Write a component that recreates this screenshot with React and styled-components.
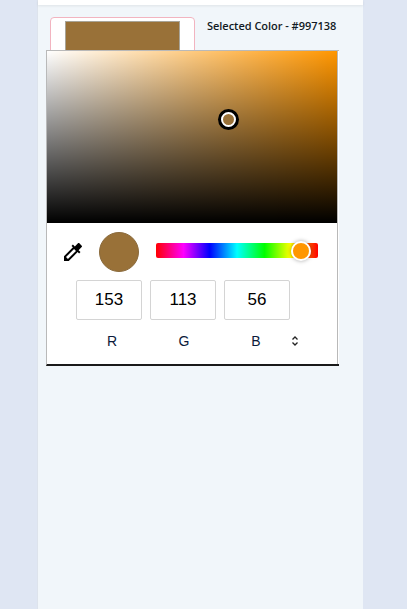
import React from "react";
import styled, { createGlobalStyle } from "styled-components";

const Global = createGlobalStyle`
  html, body { margin: 0; padding: 0; height: 100%; overflow: hidden; background: #dfe6f3; }
  #root { height: 609px; }
  * { box-sizing: border-box; }
`;

const Page = styled.div`
  width: 407px;
  height: 609px;
  padding-left: 37px;
  background: #dfe6f3;
`;

const Column = styled.main`
  position: relative;
  width: 326px;
  height: 609px;
  background: #f1f6fa;
  border-left: 1px solid #dde3ec;
`;

const TopCard = styled.div`
  height: 5px;
  background: #ffffff;
  box-shadow: 0 1px 3px rgba(0, 0, 0, 0.08);
`;

const SelectedRow = styled.section`
  display: flex;
  align-items: flex-start;
  padding: 12px 0 0 12px;
`;

const SwatchFrame = styled.div`
  display: flex;
  justify-content: center;
  width: 145px;
  height: 60px;
  padding-top: 3px;
  background: #ffffff;
  border: 1.5px solid #f2b4c0;
  border-radius: 4px;
`;

const Swatch = styled.div`
  width: 115px;
  height: 50px;
  background: #997138;
  border: 1px solid #a8a498;
`;

const SelectedLabel = styled.p`
  margin: 2px 0 0 12px;
  font: 600 11px/14px "Open Sans", sans-serif;
  letter-spacing: -0.03px;
  color: #111a24;
  white-space: nowrap;
`;

const Popover = styled.div`
  position: absolute;
  left: 8px;
  top: 50px;
  width: 293px;
  height: 316px;
  background: #ffffff;
  border-top: 1px solid #b9b9b9;
  border-left: 1px solid #b9b9b9;
  border-bottom: 2px solid #1a1a1a;
`;

const Inner = styled.div`
  width: 291px;
  height: 100%;
  border-right: 1px solid #b9b9b9;
`;

const Saturation = styled.div`
  position: relative;
  height: 172px;
  background:
    linear-gradient(to top, #000000, rgba(0, 0, 0, 0)),
    linear-gradient(to right, #ffffff, rgba(255, 255, 255, 0)),
    #ff9600;
`;

const Cursor = styled.div`
  position: absolute;
  left: 174px;
  top: 61px;
  width: 15px;
  height: 15px;
  border-radius: 50%;
  background: #997138;
  border: 2px solid #ffffff;
  box-shadow: 0 0 0 3px #000000;
`;

const Controls = styled.div`
  display: flex;
  align-items: center;
  padding: 9px 0 0 14px;
`;

const Dropper = styled.svg`
  display: block;
  width: 24px;
  height: 24px;
  fill: #000000;
`;

const Preview = styled.div`
  width: 40px;
  height: 40px;
  margin-left: 14px;
  border-radius: 50%;
  background: #997138;
  border: 1px solid #8a6a3c;
`;

const Hue = styled.div`
  position: relative;
  width: 162px;
  height: 15px;
  margin: 0 0 3px 17px;
  border-radius: 2px;
  background: linear-gradient(
    to right,
    #ff0000 0%,
    #ff00ff 17%,
    #0000ff 33%,
    #00ffff 50%,
    #00ff00 67%,
    #ffff00 83%,
    #ff0000 100%
  );
`;

const HueThumb = styled.div`
  position: absolute;
  left: 135px;
  top: -2px;
  width: 20px;
  height: 20px;
  border-radius: 50%;
  background: #ff9600;
  border: 2px solid #ffffff;
  box-shadow: 0 0 4px rgba(0, 0, 0, 0.35);
`;

const Inputs = styled.div`
  display: flex;
  gap: 8px;
  padding: 8px 0 0 29px;
`;

const ChannelInput = styled.input`
  width: 66px;
  height: 40px;
  padding: 0;
  text-align: center;
  font: 400 17px "Liberation Sans", Arial, sans-serif;
  color: #000000;
  background: #ffffff;
  border: 1px solid #d4d4d4;
  border-radius: 2px;
  outline: none;
`;

const Labels = styled.div`
  display: flex;
  align-items: center;
  padding: 13px 0 0 29px;
`;

const ChannelLabel = styled.span`
  width: 72px;
  text-align: center;
  font: 400 14px/16px "Liberation Sans", Arial, sans-serif;
  color: #0b1a3a;
`;

const ModeToggle = styled.svg`
  display: block;
  width: 12px;
  height: 12px;
  margin-left: -3px;
  fill: none;
  stroke: #222222;
  stroke-width: 1.3;
`;

export default function App() {
  return (
    <Page>
      <Global />
      <Column>
        <TopCard />
        <SelectedRow>
          <SwatchFrame>
            <Swatch />
          </SwatchFrame>
          <SelectedLabel>Selected Color - #997138</SelectedLabel>
        </SelectedRow>
        <Popover>
          <Inner>
            <Saturation>
              <Cursor />
            </Saturation>
            <Controls>
              <Dropper viewBox="0 0 24 24">
                <path d="M20.71 5.63l-2.34-2.34c-.39-.39-1.02-.39-1.41 0l-3.12 3.12-1.93-1.91-1.41 1.41 1.42 1.42L3 16.25V21h4.75l8.92-8.92 1.42 1.42 1.41-1.41-1.92-1.92 3.12-3.12c.4-.4.4-1.03.01-1.42zM6.92 19L5 17.08l8.06-8.06 1.92 1.92L6.92 19z" />
              </Dropper>
              <Preview />
              <Hue>
                <HueThumb />
              </Hue>
            </Controls>
            <Inputs>
              <ChannelInput readOnly value="153" />
              <ChannelInput readOnly value="113" />
              <ChannelInput readOnly value="56" />
            </Inputs>
            <Labels>
              <ChannelLabel>R</ChannelLabel>
              <ChannelLabel>G</ChannelLabel>
              <ChannelLabel>B</ChannelLabel>
              <ModeToggle viewBox="0 0 12 12">
                <path d="M3.5 4.5 6 2l2.5 2.5M3.5 7.5 6 10l2.5-2.5" />
              </ModeToggle>
            </Labels>
          </Inner>
        </Popover>
      </Column>
    </Page>
  );
}
